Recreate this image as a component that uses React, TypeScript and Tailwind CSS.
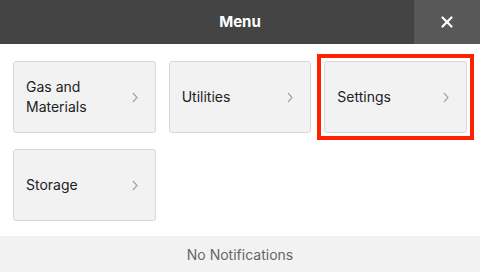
import { X } from 'lucide-react';

const items = ['Gas and Materials', 'Utilities', 'Settings', 'Storage'];

function Chevron() {
    return (
        <svg width="6" height="11" viewBox="0 0 6 11" className="shrink-0">
            <polyline points="1,1 5,5.5 1,10" fill="none" stroke="#a8a8a8" strokeWidth="1.3" />
        </svg>
    );
}

function Card({ label }: { label: string }) {
    return (
        <div className="h-full flex items-center justify-between bg-[#f2f2f2] border border-[#d8d8d8] rounded-[3px] pl-[12px] pr-[17px] text-[14px] leading-[20px] text-[#222]">
            <span className="w-[80px]">{label}</span>
            <Chevron />
        </div>
    );
}

export default function App() {
    return (
        <div className="w-[480px] h-[272px] flex flex-col bg-white overflow-hidden font-['Inter',sans-serif]">
            {/* Header */}
            <div className="h-[44px] flex bg-[#444444] shrink-0">
                <div className="flex-1 flex items-center justify-center pl-[66px] text-white font-bold text-[15px]">
                    Menu
                </div>
                <button className="w-[66px] h-full bg-[#585858] flex items-center justify-center text-white">
                    <X size={18} strokeWidth={3} />
                </button>
            </div>

            {/* Menu grid */}
            <div className="flex-1 grid grid-cols-3 auto-rows-[72px] gap-x-[13px] gap-y-[16px] px-[13px] pt-[17px]">
                {items.map((label) =>
                    label === 'Settings' ? (
                        <div key={label} className="-m-[7px] border-4 border-[#ff2200] p-[3px] bg-white">
                            <Card label={label} />
                        </div>
                    ) : (
                        <Card key={label} label={label} />
                    )
                )}
            </div>

            {/* Footer */}
            <div className="h-[36px] shrink-0 bg-[#f2f2f2] flex items-center justify-center text-[14px] text-[#666]">
                No Notifications
            </div>
        </div>
    );
}
